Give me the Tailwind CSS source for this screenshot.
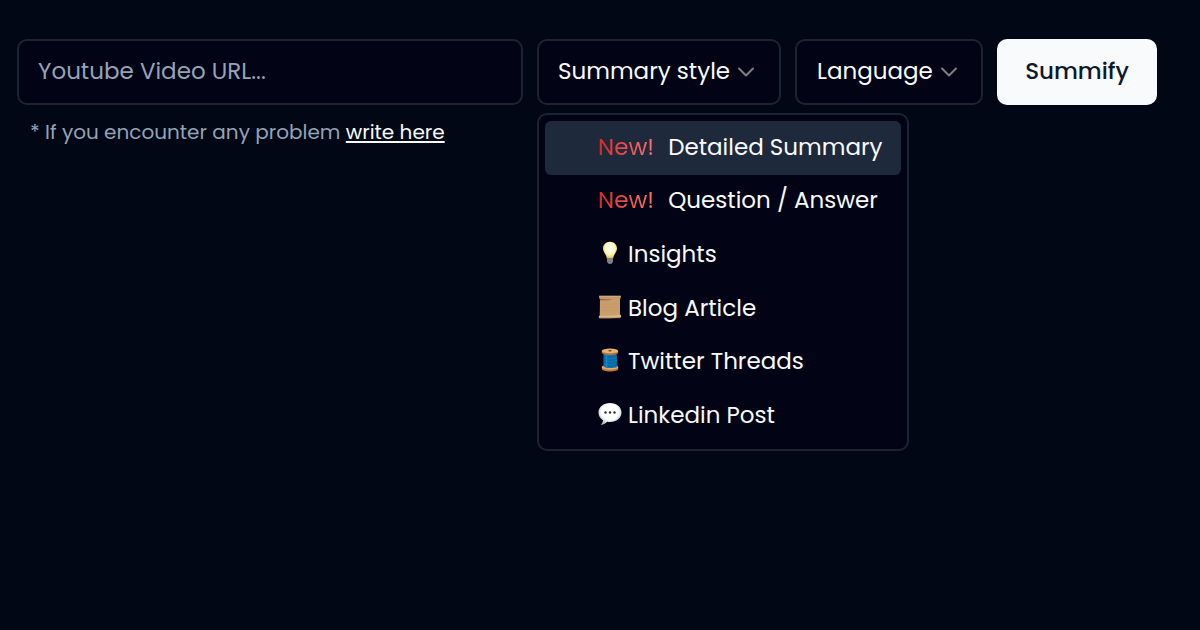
<!DOCTYPE html>
<html lang="en">
<head>
<meta charset="utf-8">
<meta name="viewport" content="width=device-width, initial-scale=1">
<title>Summify</title>
<script src="https://cdn.jsdelivr.net/npm/@tailwindcss/browser@4"></script>
</head>
<body class="min-h-screen bg-[#010714] font-['Poppins','Inter',sans-serif] text-[23px] text-slate-50">
<main class="pt-[39px] pr-[43px] pl-[17px]">
  <form class="flex items-start gap-3.5">
    <div class="min-w-0 flex-1">
      <input type="url" aria-label="Youtube Video URL" placeholder="Youtube Video URL..." class="block h-[66px] w-full rounded-[10px] border-2 border-[#1c2432] bg-[#020415] px-[19px] pb-0.5 placeholder:text-[#94a3b8]">
      <p class="mt-3 pl-[13px] text-xl leading-[30px] whitespace-nowrap text-[#94a3b8]">* If you encounter any problem <a href="#" class="text-slate-50 underline decoration-2 underline-offset-2">write here</a></p>
    </div>
    <div class="relative w-[244px]">
      <button type="button" aria-haspopup="menu" aria-expanded="true" aria-controls="styles" class="flex h-[66px] w-full items-center gap-1.5 rounded-[10px] border-2 border-[#1c2432] bg-[#020415] pb-0.5 pl-[19px] whitespace-nowrap">
        Summary style
        <svg class="size-5 shrink-0 text-slate-50/50" viewBox="0 0 20 20" fill="none" stroke="currentColor" stroke-width="2" stroke-linecap="round" stroke-linejoin="round" aria-hidden="true"><path d="M3 7.500l7 7 7-7"/></svg>
      </button>
      <div id="styles" role="menu" aria-label="Summary style" class="absolute top-full left-0 mt-2 grid min-h-[338px] w-[372px] auto-rows-fr rounded-[10px] border-2 border-[#1c2432] bg-[#020415] p-1.5 whitespace-nowrap">
        <button type="button" role="menuitem" class="flex items-center gap-3.5 rounded-md bg-[#1e293b] pb-0.5 pl-[53px]"><span class="bg-linear-to-r from-[#dc2626] to-[#f87171] bg-clip-text text-transparent">New!</span>Detailed Summary</button>
        <button type="button" role="menuitem" class="flex items-center gap-3.5 rounded-md pb-0.5 pl-[53px]"><span class="bg-linear-to-r from-[#dc2626] to-[#f87171] bg-clip-text text-transparent">New!</span>Question / Answer</button>
        <button type="button" role="menuitem" class="flex items-center gap-1.5 rounded-md pb-0.5 pl-[53px]">
          <svg class="mb-0.5 size-6" viewBox="0 0 24 24" aria-hidden="true">
            <defs><radialGradient id="glow" cx=".5" cy=".4" r=".6"><stop offset=".2" stop-color="#fffff0"/><stop offset=".65" stop-color="#fff3b0"/><stop offset="1" stop-color="#d6b75c"/></radialGradient></defs>
            <path d="M12 .8c-4 0-7 2.900-7 6.700 0 3.700 3.300 5.500 3.800 10h6.400c.5-4.500 3.800-6.300 3.800-10C19 3.700 16 .8 12 .8z" fill="url(#glow)"/>
            <path d="M9 17.200h6v3.500l-1.500 2h-3L9 20.700z" fill="#8d8d91"/><path d="M9 18.800h6M9.200 20.500h5.600" stroke="#66676c" stroke-width=".6"/>
          </svg>Insights</button>
        <button type="button" role="menuitem" class="flex items-center gap-1.5 rounded-md pb-0.5 pl-[53px]">
          <svg class="mb-0.5 size-6" viewBox="0 0 24 24" aria-hidden="true">
            <path d="M2 2.500h20v18.500H1.800z" fill="#c99d6c"/><path d="M2 3.800h13l-4 1.400H2z" fill="#8b6240"/>
            <path d="M1 1h22l-.6 2.800L10 4.600 1.500 4z" fill="#c49767"/><path d="M1.200 1.100h21.600" stroke="#dfc298" stroke-width=".7"/>
            <path d="M4 9h15M4 12h16M4 15h15" stroke="#bd9060" stroke-width=".5"/>
            <path d="M1.500 20.500c7 .5 14 .2 21-.7.900.8.900 2.200 0 3-7 .4-14 .5-21 .5-1-.8-1-2 0-2.800z" fill="#dcb78a"/><path d="M1.500 22.900h20.500" stroke="#a17348" stroke-width=".6"/>
          </svg>Blog Article</button>
        <button type="button" role="menuitem" class="flex items-center gap-1.5 rounded-md pb-0.5 pl-[53px]">
          <svg class="mb-0.5 size-6" viewBox="0 0 24 24" aria-hidden="true">
            <path d="M3.800 19c0-1.200 3.500-2 8.200-2s8.200.8 8.200 2v2c0 1.500-3.700 2.500-8.200 2.500S3.800 22.500 3.800 21z" fill="#b77637"/><ellipse cx="12" cy="19.300" rx="8.200" ry="2.400" fill="#e0aa6b"/>
            <path d="M5.500 4.500h13v13.700c-1 1.300-3.500 1.800-6.500 1.800s-5.500-.5-6.500-1.800z" fill="#0876b4"/>
            <path d="M5.500 8c4 1.700 9 1.700 13 0M5.500 11c4 1.700 9 1.700 13 0M5.500 14c4 1.700 9 1.700 13 0M5.500 17c4 1.700 9 1.700 13 0" fill="none" stroke="#07568d" stroke-width=".7"/>
            <path d="M8.500 6v13" stroke="#2aa0d8" stroke-width="1.500" opacity=".5"/>
            <path d="M18 7l1 10-1.500 3" fill="none" stroke="#0876b4" stroke-width="1"/>
            <path d="M3.800 3v1.500c0 1.500 3.700 2.500 8.200 2.500s8.200-1 8.200-2.500V3z" fill="#b77637"/><ellipse cx="12" cy="2.900" rx="8.200" ry="2.400" fill="#e5b377"/><ellipse cx="12" cy="2.700" rx="1.700" ry=".7" fill="#68401f"/>
          </svg>Twitter Threads</button>
        <button type="button" role="menuitem" class="flex items-center gap-1.5 rounded-md pb-0.5 pl-[53px]">
          <svg class="mb-0.5 size-6" viewBox="0 0 24 24" aria-hidden="true">
            <defs><radialGradient id="bubble" cx=".5" cy=".4" r=".6"><stop offset=".6" stop-color="#fff"/><stop offset="1" stop-color="#b9babd"/></radialGradient></defs>
            <path d="M12 1C5.500 1 .5 5 .5 10.500c0 3.300 1.700 6 4.500 7.700 0 1.800-1 3.300-2.300 4.600 3 .1 5.200-1.400 6.500-3 .9.200 1.800.2 2.800.2 6.500 0 11.500-4 11.500-9.500S18.500 1 12 1z" fill="url(#bubble)"/>
            <g fill="#303136"><circle cx="7.500" cy="10.500" r="1.200"/><circle cx="12" cy="10.500" r="1.200"/><circle cx="16.500" cy="10.500" r="1.200"/></g>
          </svg>Linkedin Post</button>
      </div>
    </div>
    <button type="button" aria-haspopup="menu" class="flex h-[66px] w-[188px] items-center gap-1.5 rounded-[10px] border-2 border-[#1c2432] bg-[#020415] pb-0.5 pl-5 whitespace-nowrap">
      Language
      <svg class="size-5 shrink-0 text-slate-50/50" viewBox="0 0 20 20" fill="none" stroke="currentColor" stroke-width="2" stroke-linecap="round" stroke-linejoin="round" aria-hidden="true"><path d="M3 7.500l7 7 7-7"/></svg>
    </button>
    <button type="submit" class="h-[66px] w-40 rounded-[10px] bg-slate-50 pb-0.5 font-medium text-slate-900">Summify</button>
  </form>
</main>
</body>
</html>
